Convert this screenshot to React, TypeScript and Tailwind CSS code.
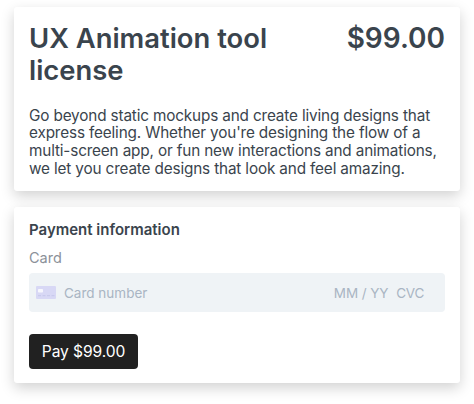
import React from 'react';

const description = [
  'Go beyond static mockups and create living designs that',
  "express feeling. Whether you're designing the flow of a",
  'multi-screen app, or fun new interactions and animations,',
  'we let you create designs that look and feel amazing.',
];

function CardIcon() {
  return (
    <svg viewBox="0 0 20 13" className="w-5 h-[13px] shrink-0" aria-hidden="true">
      <rect width="20" height="13" rx="1" fill="#d8d8f5" />
      <rect x="2" y="3" width="5" height="3.5" rx="0.8" fill="#f7f7fe" />
      <path d="M2 9.7h3M6.5 9.7h3M11 9.7h3M15.5 9.7h3" stroke="#c6c7ea" strokeWidth="1" />
    </svg>
  );
}

function ProductCard() {
  return (
    <section className="h-[184px] rounded-[3px] bg-white px-[15px] pt-[16px] shadow-[0_5px_14px_rgba(0,0,0,0.18)]">
      <div className="flex items-start justify-between leading-[31.5px] font-semibold">
        <h1 className="w-[250px] text-[27.4px]">UX Animation tool license</h1>
        <p className="text-[28px]">$99.00</p>
      </div>
      <p className="mt-[20.6px] text-[15.3px] tracking-[-0.15px] leading-[17.7px] whitespace-nowrap">
        {description.map((line) => (
          <span key={line} className="block">{line}</span>
        ))}
      </p>
    </section>
  );
}

function PaymentCard() {
  return (
    <section className="mt-4 h-[176px] rounded-[3px] bg-white px-[15px] pt-[14px] shadow-[0_5px_14px_rgba(0,0,0,0.18)]">
      <h2 className="text-[15px] leading-[18px] font-semibold">Payment information</h2>
      <p className="mt-[10px] text-[14.5px] leading-[18px] text-[#8b9199]">Card</p>
      <div className="mt-[6px] flex h-[39px] items-center rounded-[4px] bg-[#eff3f6] pl-[7px] pr-[21px] text-[13.5px] text-[#a9b5c3]">
        <CardIcon />
        <span className="ml-2 flex-1 pt-px">Card number</span>
        <span className="pt-px tracking-[-0.1px]">MM / YY</span>
        <span className="ml-2 pt-px tracking-[-0.3px]">CVC</span>
      </div>
      <button className="mt-[22px] flex h-[35px] w-[109px] items-center justify-center rounded-[4px] bg-[#212121] text-[15.6px] tracking-[-0.1px] text-white">
        Pay $99.00
      </button>
    </section>
  );
}

export default function App() {
  return (
    <main className="h-[404px] w-[474px] overflow-hidden bg-white px-[14px] pt-[7px] font-['Inter',sans-serif] text-[#3a444d]">
      <ProductCard />
      <PaymentCard />
    </main>
  );
}
